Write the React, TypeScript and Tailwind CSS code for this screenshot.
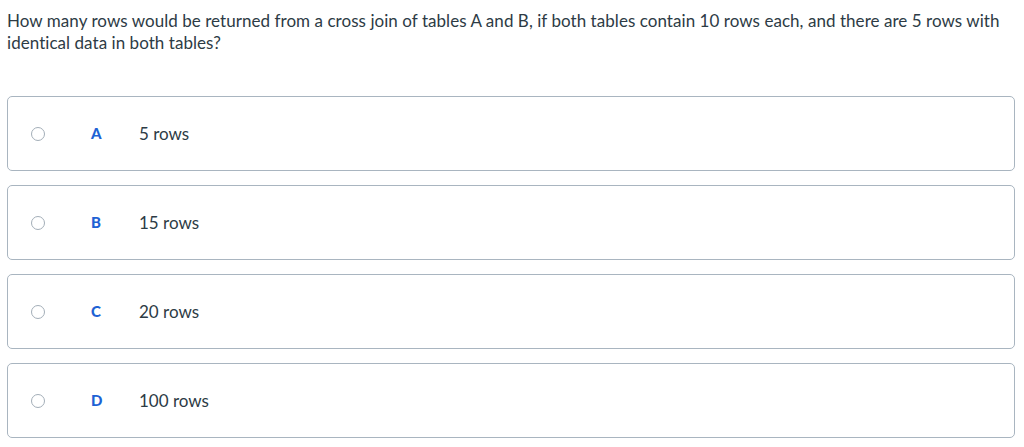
import React from "react";

const options = [
  { letter: "A", text: "5 rows" },
  { letter: "B", text: "15 rows" },
  { letter: "C", text: "20 rows" },
  { letter: "D", text: "100 rows" },
];

export default function App() {
  return (
    <div
      className="bg-white w-[1024px] h-[447px] overflow-hidden px-[7px] pt-[10px] text-[#2d3b45]"
      style={{ fontFamily: 'Lato, "Noto Sans", sans-serif' }}
    >
      <p className="text-[17px] leading-[22px] tracking-[0.05px]">
        How many rows would be returned from a cross join of tables A and B, if both tables contain 10 rows each, and
        there are 5 rows with identical data in both tables?
      </p>

      <div className="mt-[42px] flex flex-col gap-[14px] w-[1008px]">
        {options.map((o) => (
          <label
            key={o.letter}
            className="h-[75px] flex items-center border border-[#a9b5c0] rounded-[5px] cursor-pointer"
          >
            <span className="ml-[23px] w-[14px] h-[14px] rounded-full border-[1.5px] border-[#a3aeb8] bg-white shrink-0" />
            <span className="ml-[46px] w-[48px] text-[15px] font-black text-[#1e62d4]">{o.letter}</span>
            <span className="text-[17px]">{o.text}</span>
          </label>
        ))}
      </div>
    </div>
  );
}
